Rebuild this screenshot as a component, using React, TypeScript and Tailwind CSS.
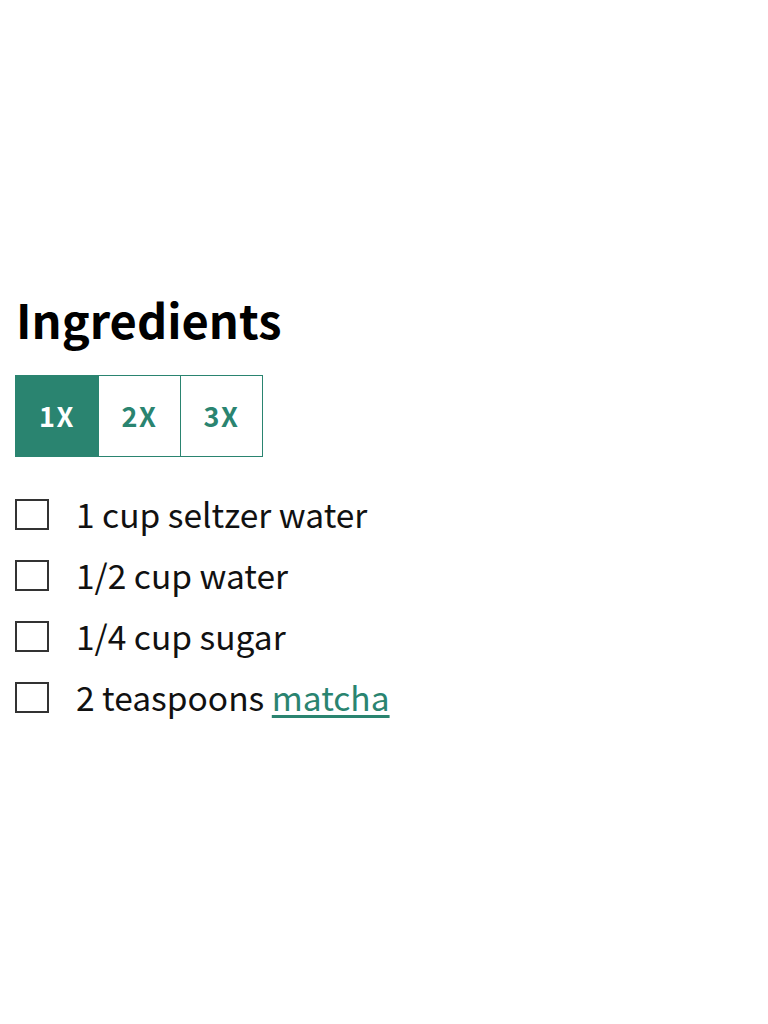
import React, { useState } from 'react';

const font = { fontFamily: '"Noto Sans CJK SC", "Noto Sans", sans-serif' };

const items = [
  { text: '1 cup seltzer water' },
  { text: '1/2 cup water' },
  { text: '1/4 cup sugar' },
  { text: '2 teaspoons ', link: 'matcha' },
];

export default function App() {
  const [scale, setScale] = useState(1);

  return (
    <div className="min-h-[1024px] bg-white px-4 pt-[287px]" style={font}>
      <h2 className="text-[47px] font-bold leading-[64px] text-black">Ingredients</h2>

      <div className="ml-[-1px] mt-[24px] flex w-fit border border-[#2a8470]">
        {[1, 2, 3].map((n) => (
          <button
            key={n}
            onClick={() => setScale(n)}
            className={
              n === scale
                ? 'flex h-[80px] w-[82px] items-center justify-center bg-[#2a8470] text-[27px] font-bold tracking-[1.5px] text-white'
                : 'flex h-[80px] w-[82px] items-center justify-center border-l border-[#2a8470] bg-white text-[27px] font-bold tracking-[1.5px] text-[#2a8470]'
            }
          >
            {n}X
          </button>
        ))}
      </div>

      <ul className="mt-[35px] flex flex-col gap-[17px]">
        {items.map((item, i) => (
          <li key={i} className="flex h-[44px] items-center gap-[27px]">
            <span className="ml-[-1px] h-[31px] w-[34px] shrink-0 border-2 border-[#333]" />
            <span className="text-[33.5px] leading-[44px] text-[#111]">
              {item.text}
              {item.link && (
                <a href="#" className="text-[#2a8470] underline underline-offset-4">
                  {item.link}
                </a>
              )}
            </span>
          </li>
        ))}
      </ul>
    </div>
  );
}
